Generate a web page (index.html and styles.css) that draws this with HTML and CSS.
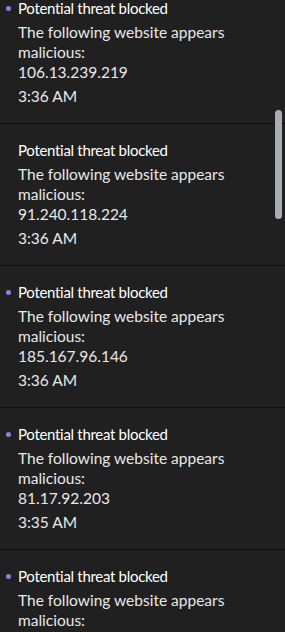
FILE: index.html
```html
<!DOCTYPE html>
<html>
<head>
  <title>Notifications</title>
  <link rel="stylesheet" href="styles.css">
</head>
<body>
  <div class="panel">
    <div class="list">
      <div class="item unread">
        <div class="item-title">Potential threat blocked</div>
        <div class="item-body">The following website appears malicious:<br>106.13.239.219</div>
        <div class="item-time">3:36 AM</div>
      </div>
      <div class="item">
        <div class="item-title">Potential threat blocked</div>
        <div class="item-body">The following website appears malicious:<br>91.240.118.224</div>
        <div class="item-time">3:36 AM</div>
      </div>
      <div class="item unread">
        <div class="item-title">Potential threat blocked</div>
        <div class="item-body">The following website appears malicious:<br>185.167.96.146</div>
        <div class="item-time">3:36 AM</div>
      </div>
      <div class="item unread">
        <div class="item-title">Potential threat blocked</div>
        <div class="item-body">The following website appears malicious:<br>81.17.92.203</div>
        <div class="item-time">3:35 AM</div>
      </div>
      <div class="item unread">
        <div class="item-title">Potential threat blocked</div>
        <div class="item-body">The following website appears malicious:<br>5.188.206.14</div>
        <div class="item-time">3:35 AM</div>
      </div>
    </div>
    <div class="scroll-thumb"></div>
  </div>
</body>
</html>
```
FILE: styles.css
```css
html, body {
  margin: 0;
  padding: 0;
  background-color: #202020;
}

body {
  font-family: Lato, "Open Sans", sans-serif;
  color: #e8e8e8;
}

.panel {
  position: relative;
  width: 285px;
  height: 632px;
  overflow: hidden;
}

.list {
  margin-top: -18px;
}

.item {
  padding: 16px 40px 17px 18px;
  border-bottom: 1px solid #0e0e0e;
}

.item-title {
  position: relative;
  font-size: 15px;
  line-height: 20px;
  color: #ffffff;
  letter-spacing: -0.3px;
}

.unread .item-title::before {
  content: "";
  position: absolute;
  left: -12px;
  top: 8px;
  width: 5px;
  height: 5px;
  border-radius: 50%;
  background-color: #7c87ea;
}

.item-body {
  margin-top: 4px;
  font-size: 15.5px;
  line-height: 20px;
}

.item-time {
  margin-top: 4px;
  font-size: 15.5px;
  line-height: 20px;
}

.scroll-thumb {
  position: absolute;
  right: 3px;
  top: 110px;
  width: 7px;
  height: 109px;
  border-radius: 4px;
  background-color: #a9acb1;
}
```
